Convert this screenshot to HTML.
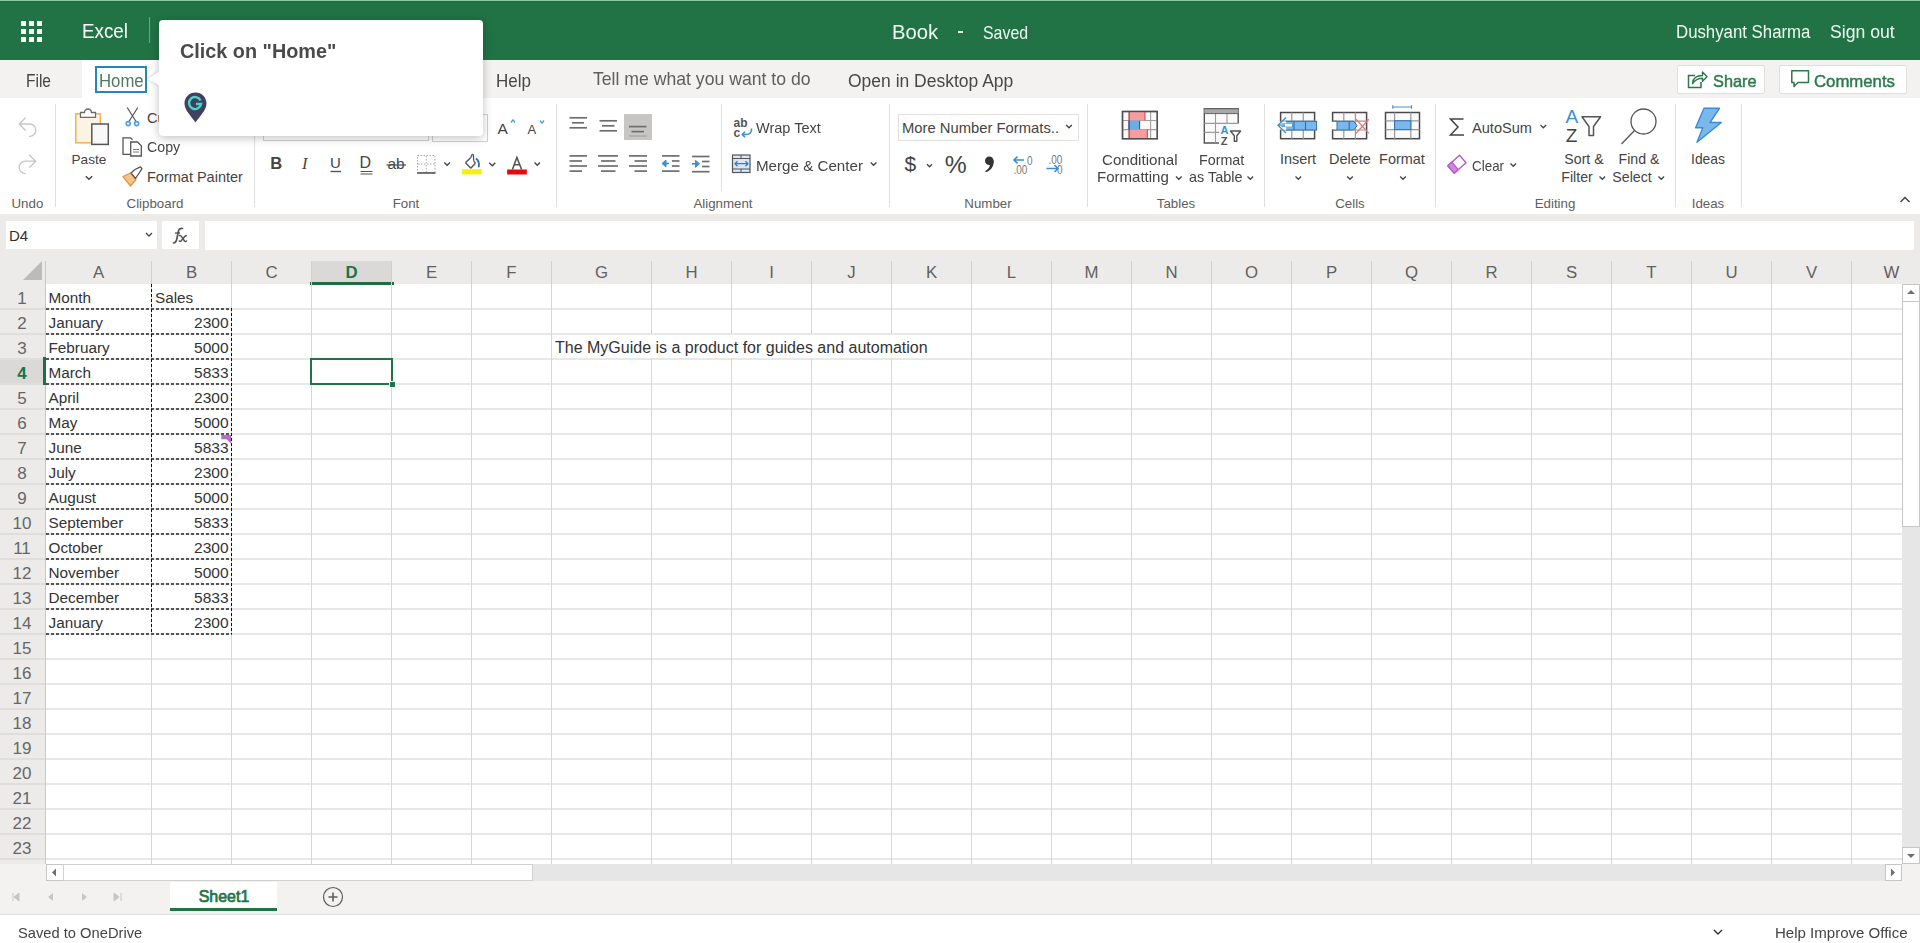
<!DOCTYPE html>
<html><head><meta charset="utf-8"><style>
html,body{margin:0;padding:0;}
body{width:1920px;height:943px;position:relative;overflow:hidden;background:#fff;font-family:"Liberation Sans", sans-serif;}
.a{position:absolute;}
.t{position:absolute;white-space:nowrap;line-height:1;}
svg.a{overflow:visible;}
</style></head><body>
<div class="a" style="left:0px;top:0px;width:1920px;height:60px;background:#217346;"></div>
<div class="a" style="left:0px;top:0px;width:1920px;height:1px;background:#8ecba5;"></div>
<div class="a" style="left:0px;top:1px;width:1920px;height:1px;background:#206843;"></div>
<div class="a" style="left:0px;top:60px;width:1920px;height:38px;background:#f3f2f1;"></div>
<div class="a" style="left:0px;top:98px;width:1920px;height:116px;background:#fff;"></div>
<div class="a" style="left:0px;top:214px;width:1920px;height:70px;background:#edebe9;"></div>
<div class="a" style="left:0px;top:284px;width:1920px;height:580px;background:#fff;"></div>
<div class="a" style="left:21px;top:21px;width:5px;height:5px;background:#fff;"></div>
<div class="a" style="left:21px;top:29px;width:5px;height:5px;background:#fff;"></div>
<div class="a" style="left:21px;top:37px;width:5px;height:5px;background:#fff;"></div>
<div class="a" style="left:29px;top:21px;width:5px;height:5px;background:#fff;"></div>
<div class="a" style="left:29px;top:29px;width:5px;height:5px;background:#fff;"></div>
<div class="a" style="left:29px;top:37px;width:5px;height:5px;background:#fff;"></div>
<div class="a" style="left:37px;top:21px;width:5px;height:5px;background:#fff;"></div>
<div class="a" style="left:37px;top:29px;width:5px;height:5px;background:#fff;"></div>
<div class="a" style="left:37px;top:37px;width:5px;height:5px;background:#fff;"></div>
<div class="t" style="top:21px;font-size:20px;color:#fff;left:82px;transform:scaleX(0.94);transform-origin:left 50%;">Excel</div>
<div class="a" style="left:149px;top:17px;width:1px;height:26px;background:rgba(255,255,255,0.35);"></div>
<div class="t" style="top:21px;font-size:21px;color:#f0faf3;left:892px;transform:scaleX(0.965);transform-origin:left 50%;">Book</div>
<div class="a" style="left:958px;top:31px;width:5px;height:1.6px;background:#e0f0e6;"></div>
<div class="t" style="top:24px;font-size:18.5px;color:#f0faf3;left:983.4px;transform:scaleX(0.86);transform-origin:left 50%;">Saved</div>
<div class="t" style="top:23px;font-size:18px;color:#f0faf3;left:1675.6px;transform:scaleX(0.933);transform-origin:left 50%;">Dushyant Sharma</div>
<div class="t" style="top:23px;font-size:18px;color:#f0faf3;left:1830.3px;transform:scaleX(0.98);transform-origin:left 50%;">Sign out</div>
<div class="a" style="left:82px;top:60px;width:78px;height:38px;background:#fff;"></div>
<div class="t" style="top:72px;font-size:18.6px;color:#444;left:25.8px;transform:scaleX(0.834);transform-origin:left 50%;">File</div>
<div class="a" style="left:95px;top:66px;width:52px;height:27px;border:2px solid #2486b9;box-sizing:border-box;"></div>
<div class="t" style="top:72px;font-size:18.3px;color:#4f7a62;left:98.8px;transform:scaleX(0.916);transform-origin:left 50%;">Home</div>
<div class="t" style="top:72px;font-size:18.6px;color:#484848;left:496px;transform:scaleX(0.915);transform-origin:left 50%;">Help</div>
<div class="t" style="top:70px;font-size:18.6px;color:#605e5c;left:593px;transform:scaleX(0.948);transform-origin:left 50%;">Tell me what you want to do</div>
<div class="t" style="top:72px;font-size:18.7px;color:#484848;left:848px;transform:scaleX(0.936);transform-origin:left 50%;">Open in Desktop App</div>
<div class="a" style="left:1677px;top:65px;width:88px;height:29px;background:#fff;border:1px solid #e1dfdd;box-sizing:border-box;border-radius:2px;"></div>
<div class="t" style="top:73px;font-size:17px;color:#2a7a4b;left:1712.5px;transform:scaleX(0.96);transform-origin:left 50%;-webkit-text-stroke:0.45px #2a7a4b;">Share</div>
<svg class="a" style="left:1686px;top:68px;" width="24" height="22" viewBox="0 0 24 22"><path d="M9 7.5 H2.5 V19.5 H15 V14" fill="none" stroke="#2a7a4b" stroke-width="1.5"/><path d="M6.5 15.5 C7 10 11 7.5 16.5 7.5 V4 L21 8.7 L16.5 13.2 V10.2 C12 10.2 9 12 6.5 15.5 Z" fill="none" stroke="#2a7a4b" stroke-width="1.4" stroke-linejoin="round"/></svg>
<div class="a" style="left:1779px;top:65px;width:128px;height:29px;background:#fff;border:1px solid #e1dfdd;box-sizing:border-box;border-radius:2px;"></div>
<div class="t" style="top:73px;font-size:17px;color:#2a7a4b;left:1814.4px;transform:scaleX(0.985);transform-origin:left 50%;-webkit-text-stroke:0.45px #2a7a4b;">Comments</div>
<svg class="a" style="left:1790px;top:69px;" width="22" height="22" viewBox="0 0 22 22"><path d="M1.8 1.8 H18.5 V13.5 H8 L4 17.5 V13.5 H1.8 Z" fill="none" stroke="#2a7a4b" stroke-width="1.5" stroke-linejoin="round"/></svg>
<div class="a" style="left:5.5px;top:221px;width:151.5px;height:28px;background:#fff;"></div>
<div class="t" style="top:228px;font-size:15px;color:#323130;left:9px;">D4</div>
<svg class="a" style="left:144px;top:231px;" width="10" height="8" viewBox="0 0 10 8"><path d="M2 2 L5 5 L8 2" fill="none" stroke="#444" stroke-width="1.3"/></svg>
<div class="a" style="left:162px;top:221px;width:37px;height:28px;background:#fff;"></div>
<svg class="a" style="left:160px;top:220px;" width="40" height="30" viewBox="0 0 40 30"><path d="M13.5 23 C15.5 23 16.5 21 17 18 L18.6 10.5 C19.2 8.5 20.5 8 22.5 8.5" fill="none" stroke="#555" stroke-width="1.7" stroke-linecap="round"/><path d="M15 13 H20" stroke="#555" stroke-width="1.4"/><path d="M19.5 15.5 C21 15 21.5 16 22.5 18 L24.5 21 C25.5 22 26 21.5 26.5 21 M26.2 15.5 C25 16 24 17 23 18.5 L21 21 C20.5 21.5 19.8 21.5 19.3 21" fill="none" stroke="#555" stroke-width="1.5" stroke-linecap="round"/></svg>
<div class="a" style="left:205px;top:221px;width:1709px;height:29px;background:#fff;"></div>
<div class="a" style="left:311px;top:261px;width:81px;height:23px;background:#dad9d8;"></div>
<div class="a" style="left:310px;top:282px;width:84px;height:3px;background:#1f6e43;"></div>
<div class="a" style="left:45px;top:261px;width:1px;height:23px;background:#d2d0ce;"></div>
<div class="t" style="top:265px;font-size:16.8px;color:#616161;left:98.5px;transform:translateX(-50%);transform-origin:center 50%;">A</div>
<div class="a" style="left:151px;top:261px;width:1px;height:23px;background:#d2d0ce;"></div>
<div class="t" style="top:265px;font-size:16.8px;color:#616161;left:191.5px;transform:translateX(-50%);transform-origin:center 50%;">B</div>
<div class="a" style="left:231px;top:261px;width:1px;height:23px;background:#d2d0ce;"></div>
<div class="t" style="top:265px;font-size:16.8px;color:#616161;left:271.5px;transform:translateX(-50%);transform-origin:center 50%;">C</div>
<div class="a" style="left:311px;top:261px;width:1px;height:23px;background:#d2d0ce;"></div>
<div class="t" style="top:265px;font-size:16.8px;color:#217346;font-weight:bold;left:351.5px;transform:translateX(-50%);transform-origin:center 50%;">D</div>
<div class="a" style="left:391px;top:261px;width:1px;height:23px;background:#d2d0ce;"></div>
<div class="t" style="top:265px;font-size:16.8px;color:#616161;left:431.5px;transform:translateX(-50%);transform-origin:center 50%;">E</div>
<div class="a" style="left:471px;top:261px;width:1px;height:23px;background:#d2d0ce;"></div>
<div class="t" style="top:265px;font-size:16.8px;color:#616161;left:511.5px;transform:translateX(-50%);transform-origin:center 50%;">F</div>
<div class="a" style="left:551px;top:261px;width:1px;height:23px;background:#d2d0ce;"></div>
<div class="t" style="top:265px;font-size:16.8px;color:#616161;left:601.5px;transform:translateX(-50%);transform-origin:center 50%;">G</div>
<div class="a" style="left:651px;top:261px;width:1px;height:23px;background:#d2d0ce;"></div>
<div class="t" style="top:265px;font-size:16.8px;color:#616161;left:691.5px;transform:translateX(-50%);transform-origin:center 50%;">H</div>
<div class="a" style="left:731px;top:261px;width:1px;height:23px;background:#d2d0ce;"></div>
<div class="t" style="top:265px;font-size:16.8px;color:#616161;left:771.5px;transform:translateX(-50%);transform-origin:center 50%;">I</div>
<div class="a" style="left:811px;top:261px;width:1px;height:23px;background:#d2d0ce;"></div>
<div class="t" style="top:265px;font-size:16.8px;color:#616161;left:851.5px;transform:translateX(-50%);transform-origin:center 50%;">J</div>
<div class="a" style="left:891px;top:261px;width:1px;height:23px;background:#d2d0ce;"></div>
<div class="t" style="top:265px;font-size:16.8px;color:#616161;left:931.5px;transform:translateX(-50%);transform-origin:center 50%;">K</div>
<div class="a" style="left:971px;top:261px;width:1px;height:23px;background:#d2d0ce;"></div>
<div class="t" style="top:265px;font-size:16.8px;color:#616161;left:1011.5px;transform:translateX(-50%);transform-origin:center 50%;">L</div>
<div class="a" style="left:1051px;top:261px;width:1px;height:23px;background:#d2d0ce;"></div>
<div class="t" style="top:265px;font-size:16.8px;color:#616161;left:1091.5px;transform:translateX(-50%);transform-origin:center 50%;">M</div>
<div class="a" style="left:1131px;top:261px;width:1px;height:23px;background:#d2d0ce;"></div>
<div class="t" style="top:265px;font-size:16.8px;color:#616161;left:1171.5px;transform:translateX(-50%);transform-origin:center 50%;">N</div>
<div class="a" style="left:1211px;top:261px;width:1px;height:23px;background:#d2d0ce;"></div>
<div class="t" style="top:265px;font-size:16.8px;color:#616161;left:1251.5px;transform:translateX(-50%);transform-origin:center 50%;">O</div>
<div class="a" style="left:1291px;top:261px;width:1px;height:23px;background:#d2d0ce;"></div>
<div class="t" style="top:265px;font-size:16.8px;color:#616161;left:1331.5px;transform:translateX(-50%);transform-origin:center 50%;">P</div>
<div class="a" style="left:1371px;top:261px;width:1px;height:23px;background:#d2d0ce;"></div>
<div class="t" style="top:265px;font-size:16.8px;color:#616161;left:1411.5px;transform:translateX(-50%);transform-origin:center 50%;">Q</div>
<div class="a" style="left:1451px;top:261px;width:1px;height:23px;background:#d2d0ce;"></div>
<div class="t" style="top:265px;font-size:16.8px;color:#616161;left:1491.5px;transform:translateX(-50%);transform-origin:center 50%;">R</div>
<div class="a" style="left:1531px;top:261px;width:1px;height:23px;background:#d2d0ce;"></div>
<div class="t" style="top:265px;font-size:16.8px;color:#616161;left:1571.5px;transform:translateX(-50%);transform-origin:center 50%;">S</div>
<div class="a" style="left:1611px;top:261px;width:1px;height:23px;background:#d2d0ce;"></div>
<div class="t" style="top:265px;font-size:16.8px;color:#616161;left:1651.5px;transform:translateX(-50%);transform-origin:center 50%;">T</div>
<div class="a" style="left:1691px;top:261px;width:1px;height:23px;background:#d2d0ce;"></div>
<div class="t" style="top:265px;font-size:16.8px;color:#616161;left:1731.5px;transform:translateX(-50%);transform-origin:center 50%;">U</div>
<div class="a" style="left:1771px;top:261px;width:1px;height:23px;background:#d2d0ce;"></div>
<div class="t" style="top:265px;font-size:16.8px;color:#616161;left:1811.5px;transform:translateX(-50%);transform-origin:center 50%;">V</div>
<div class="a" style="left:1851px;top:261px;width:1px;height:23px;background:#d2d0ce;"></div>
<div class="t" style="top:265px;font-size:16.8px;color:#616161;left:1891.5px;transform:translateX(-50%);transform-origin:center 50%;">W</div>
<svg class="a" style="left:23px;top:261px;" width="20" height="20" viewBox="0 0 20 20"><path d="M19 0 L19 19 L0 19 Z" fill="#bdbbb9"/></svg>
<div class="a" style="left:0px;top:284px;width:45px;height:580px;background:#edebe9;"></div>
<div class="a" style="left:45px;top:261px;width:1px;height:603px;background:#c8c6c4;"></div>
<div class="a" style="left:0px;top:359px;width:45px;height:25px;background:#dad9d8;"></div>
<div class="a" style="left:46px;top:308px;width:1856px;height:2px;background:#e8e8e8;"></div>
<div class="a" style="left:0px;top:308px;width:45px;height:2px;background:#dfdedd;"></div>
<div class="t" style="top:290px;font-size:17px;color:#666;left:22px;transform:translateX(-50%);transform-origin:center 50%;">1</div>
<div class="a" style="left:46px;top:333px;width:1856px;height:2px;background:#e8e8e8;"></div>
<div class="a" style="left:0px;top:333px;width:45px;height:2px;background:#dfdedd;"></div>
<div class="t" style="top:315px;font-size:17px;color:#666;left:22px;transform:translateX(-50%);transform-origin:center 50%;">2</div>
<div class="a" style="left:46px;top:358px;width:1856px;height:2px;background:#e8e8e8;"></div>
<div class="a" style="left:0px;top:358px;width:45px;height:2px;background:#dfdedd;"></div>
<div class="t" style="top:340px;font-size:17px;color:#666;left:22px;transform:translateX(-50%);transform-origin:center 50%;">3</div>
<div class="a" style="left:46px;top:383px;width:1856px;height:2px;background:#e8e8e8;"></div>
<div class="a" style="left:0px;top:383px;width:45px;height:2px;background:#dfdedd;"></div>
<div class="t" style="top:365px;font-size:17px;color:#217346;font-weight:bold;left:22px;transform:translateX(-50%);transform-origin:center 50%;">4</div>
<div class="a" style="left:46px;top:408px;width:1856px;height:2px;background:#e8e8e8;"></div>
<div class="a" style="left:0px;top:408px;width:45px;height:2px;background:#dfdedd;"></div>
<div class="t" style="top:390px;font-size:17px;color:#666;left:22px;transform:translateX(-50%);transform-origin:center 50%;">5</div>
<div class="a" style="left:46px;top:433px;width:1856px;height:2px;background:#e8e8e8;"></div>
<div class="a" style="left:0px;top:433px;width:45px;height:2px;background:#dfdedd;"></div>
<div class="t" style="top:415px;font-size:17px;color:#666;left:22px;transform:translateX(-50%);transform-origin:center 50%;">6</div>
<div class="a" style="left:46px;top:458px;width:1856px;height:2px;background:#e8e8e8;"></div>
<div class="a" style="left:0px;top:458px;width:45px;height:2px;background:#dfdedd;"></div>
<div class="t" style="top:440px;font-size:17px;color:#666;left:22px;transform:translateX(-50%);transform-origin:center 50%;">7</div>
<div class="a" style="left:46px;top:483px;width:1856px;height:2px;background:#e8e8e8;"></div>
<div class="a" style="left:0px;top:483px;width:45px;height:2px;background:#dfdedd;"></div>
<div class="t" style="top:465px;font-size:17px;color:#666;left:22px;transform:translateX(-50%);transform-origin:center 50%;">8</div>
<div class="a" style="left:46px;top:508px;width:1856px;height:2px;background:#e8e8e8;"></div>
<div class="a" style="left:0px;top:508px;width:45px;height:2px;background:#dfdedd;"></div>
<div class="t" style="top:490px;font-size:17px;color:#666;left:22px;transform:translateX(-50%);transform-origin:center 50%;">9</div>
<div class="a" style="left:46px;top:533px;width:1856px;height:2px;background:#e8e8e8;"></div>
<div class="a" style="left:0px;top:533px;width:45px;height:2px;background:#dfdedd;"></div>
<div class="t" style="top:515px;font-size:17px;color:#666;left:22px;transform:translateX(-50%);transform-origin:center 50%;">10</div>
<div class="a" style="left:46px;top:558px;width:1856px;height:2px;background:#e8e8e8;"></div>
<div class="a" style="left:0px;top:558px;width:45px;height:2px;background:#dfdedd;"></div>
<div class="t" style="top:540px;font-size:17px;color:#666;left:22px;transform:translateX(-50%);transform-origin:center 50%;">11</div>
<div class="a" style="left:46px;top:583px;width:1856px;height:2px;background:#e8e8e8;"></div>
<div class="a" style="left:0px;top:583px;width:45px;height:2px;background:#dfdedd;"></div>
<div class="t" style="top:565px;font-size:17px;color:#666;left:22px;transform:translateX(-50%);transform-origin:center 50%;">12</div>
<div class="a" style="left:46px;top:608px;width:1856px;height:2px;background:#e8e8e8;"></div>
<div class="a" style="left:0px;top:608px;width:45px;height:2px;background:#dfdedd;"></div>
<div class="t" style="top:590px;font-size:17px;color:#666;left:22px;transform:translateX(-50%);transform-origin:center 50%;">13</div>
<div class="a" style="left:46px;top:633px;width:1856px;height:2px;background:#e8e8e8;"></div>
<div class="a" style="left:0px;top:633px;width:45px;height:2px;background:#dfdedd;"></div>
<div class="t" style="top:615px;font-size:17px;color:#666;left:22px;transform:translateX(-50%);transform-origin:center 50%;">14</div>
<div class="a" style="left:46px;top:658px;width:1856px;height:2px;background:#e8e8e8;"></div>
<div class="a" style="left:0px;top:658px;width:45px;height:2px;background:#dfdedd;"></div>
<div class="t" style="top:640px;font-size:17px;color:#666;left:22px;transform:translateX(-50%);transform-origin:center 50%;">15</div>
<div class="a" style="left:46px;top:683px;width:1856px;height:2px;background:#e8e8e8;"></div>
<div class="a" style="left:0px;top:683px;width:45px;height:2px;background:#dfdedd;"></div>
<div class="t" style="top:665px;font-size:17px;color:#666;left:22px;transform:translateX(-50%);transform-origin:center 50%;">16</div>
<div class="a" style="left:46px;top:708px;width:1856px;height:2px;background:#e8e8e8;"></div>
<div class="a" style="left:0px;top:708px;width:45px;height:2px;background:#dfdedd;"></div>
<div class="t" style="top:690px;font-size:17px;color:#666;left:22px;transform:translateX(-50%);transform-origin:center 50%;">17</div>
<div class="a" style="left:46px;top:733px;width:1856px;height:2px;background:#e8e8e8;"></div>
<div class="a" style="left:0px;top:733px;width:45px;height:2px;background:#dfdedd;"></div>
<div class="t" style="top:715px;font-size:17px;color:#666;left:22px;transform:translateX(-50%);transform-origin:center 50%;">18</div>
<div class="a" style="left:46px;top:758px;width:1856px;height:2px;background:#e8e8e8;"></div>
<div class="a" style="left:0px;top:758px;width:45px;height:2px;background:#dfdedd;"></div>
<div class="t" style="top:740px;font-size:17px;color:#666;left:22px;transform:translateX(-50%);transform-origin:center 50%;">19</div>
<div class="a" style="left:46px;top:783px;width:1856px;height:2px;background:#e8e8e8;"></div>
<div class="a" style="left:0px;top:783px;width:45px;height:2px;background:#dfdedd;"></div>
<div class="t" style="top:765px;font-size:17px;color:#666;left:22px;transform:translateX(-50%);transform-origin:center 50%;">20</div>
<div class="a" style="left:46px;top:808px;width:1856px;height:2px;background:#e8e8e8;"></div>
<div class="a" style="left:0px;top:808px;width:45px;height:2px;background:#dfdedd;"></div>
<div class="t" style="top:790px;font-size:17px;color:#666;left:22px;transform:translateX(-50%);transform-origin:center 50%;">21</div>
<div class="a" style="left:46px;top:833px;width:1856px;height:2px;background:#e8e8e8;"></div>
<div class="a" style="left:0px;top:833px;width:45px;height:2px;background:#dfdedd;"></div>
<div class="t" style="top:815px;font-size:17px;color:#666;left:22px;transform:translateX(-50%);transform-origin:center 50%;">22</div>
<div class="a" style="left:46px;top:858px;width:1856px;height:2px;background:#e8e8e8;"></div>
<div class="a" style="left:0px;top:858px;width:45px;height:2px;background:#dfdedd;"></div>
<div class="t" style="top:840px;font-size:17px;color:#666;left:22px;transform:translateX(-50%);transform-origin:center 50%;">23</div>
<div class="a" style="left:151px;top:284px;width:1px;height:580px;background:#d6d6d6;"></div>
<div class="a" style="left:231px;top:284px;width:1px;height:580px;background:#d6d6d6;"></div>
<div class="a" style="left:311px;top:284px;width:1px;height:580px;background:#d6d6d6;"></div>
<div class="a" style="left:391px;top:284px;width:1px;height:580px;background:#d6d6d6;"></div>
<div class="a" style="left:471px;top:284px;width:1px;height:580px;background:#d6d6d6;"></div>
<div class="a" style="left:551px;top:284px;width:1px;height:580px;background:#d6d6d6;"></div>
<div class="a" style="left:651px;top:284px;width:1px;height:580px;background:#d6d6d6;"></div>
<div class="a" style="left:731px;top:284px;width:1px;height:580px;background:#d6d6d6;"></div>
<div class="a" style="left:811px;top:284px;width:1px;height:580px;background:#d6d6d6;"></div>
<div class="a" style="left:891px;top:284px;width:1px;height:580px;background:#d6d6d6;"></div>
<div class="a" style="left:971px;top:284px;width:1px;height:580px;background:#d6d6d6;"></div>
<div class="a" style="left:1051px;top:284px;width:1px;height:580px;background:#d6d6d6;"></div>
<div class="a" style="left:1131px;top:284px;width:1px;height:580px;background:#d6d6d6;"></div>
<div class="a" style="left:1211px;top:284px;width:1px;height:580px;background:#d6d6d6;"></div>
<div class="a" style="left:1291px;top:284px;width:1px;height:580px;background:#d6d6d6;"></div>
<div class="a" style="left:1371px;top:284px;width:1px;height:580px;background:#d6d6d6;"></div>
<div class="a" style="left:1451px;top:284px;width:1px;height:580px;background:#d6d6d6;"></div>
<div class="a" style="left:1531px;top:284px;width:1px;height:580px;background:#d6d6d6;"></div>
<div class="a" style="left:1611px;top:284px;width:1px;height:580px;background:#d6d6d6;"></div>
<div class="a" style="left:1691px;top:284px;width:1px;height:580px;background:#d6d6d6;"></div>
<div class="a" style="left:1771px;top:284px;width:1px;height:580px;background:#d6d6d6;"></div>
<div class="a" style="left:1851px;top:284px;width:1px;height:580px;background:#d6d6d6;"></div>
<div class="t" style="top:290px;font-size:15.3px;color:#333;left:48.5px;">Month</div>
<div class="t" style="top:290px;font-size:15.3px;color:#333;left:155px;">Sales</div>
<div class="t" style="top:315px;font-size:15.3px;color:#333;left:48.5px;">January</div>
<div class="t" style="top:315px;font-size:15.5px;color:#333;right:1691.5px;">2300</div>
<div class="t" style="top:340px;font-size:15.3px;color:#333;left:48.5px;">February</div>
<div class="t" style="top:340px;font-size:15.5px;color:#333;right:1691.5px;">5000</div>
<div class="t" style="top:365px;font-size:15.3px;color:#333;left:48.5px;">March</div>
<div class="t" style="top:365px;font-size:15.5px;color:#333;right:1691.5px;">5833</div>
<div class="t" style="top:390px;font-size:15.3px;color:#333;left:48.5px;">April</div>
<div class="t" style="top:390px;font-size:15.5px;color:#333;right:1691.5px;">2300</div>
<div class="t" style="top:415px;font-size:15.3px;color:#333;left:48.5px;">May</div>
<div class="t" style="top:415px;font-size:15.5px;color:#333;right:1691.5px;">5000</div>
<div class="t" style="top:440px;font-size:15.3px;color:#333;left:48.5px;">June</div>
<div class="t" style="top:440px;font-size:15.5px;color:#333;right:1691.5px;">5833</div>
<div class="t" style="top:465px;font-size:15.3px;color:#333;left:48.5px;">July</div>
<div class="t" style="top:465px;font-size:15.5px;color:#333;right:1691.5px;">2300</div>
<div class="t" style="top:490px;font-size:15.3px;color:#333;left:48.5px;">August</div>
<div class="t" style="top:490px;font-size:15.5px;color:#333;right:1691.5px;">5000</div>
<div class="t" style="top:515px;font-size:15.3px;color:#333;left:48.5px;">September</div>
<div class="t" style="top:515px;font-size:15.5px;color:#333;right:1691.5px;">5833</div>
<div class="t" style="top:540px;font-size:15.3px;color:#333;left:48.5px;">October</div>
<div class="t" style="top:540px;font-size:15.5px;color:#333;right:1691.5px;">2300</div>
<div class="t" style="top:565px;font-size:15.3px;color:#333;left:48.5px;">November</div>
<div class="t" style="top:565px;font-size:15.5px;color:#333;right:1691.5px;">5000</div>
<div class="t" style="top:590px;font-size:15.3px;color:#333;left:48.5px;">December</div>
<div class="t" style="top:590px;font-size:15.5px;color:#333;right:1691.5px;">5833</div>
<div class="t" style="top:615px;font-size:15.3px;color:#333;left:48.5px;">January</div>
<div class="t" style="top:615px;font-size:15.5px;color:#333;right:1691.5px;">2300</div>
<div class="a" style="left:651px;top:334px;width:1px;height:24px;background:#fff;"></div>
<div class="a" style="left:731px;top:334px;width:1px;height:24px;background:#fff;"></div>
<div class="a" style="left:811px;top:334px;width:1px;height:24px;background:#fff;"></div>
<div class="a" style="left:891px;top:334px;width:1px;height:24px;background:#fff;"></div>
<div class="t" style="top:340px;font-size:16px;color:#333;left:555px;">The MyGuide is a product for guides and automation</div>
<svg class="a" style="left:0px;top:0px;" width="1920" height="943" viewBox="0 0 1920 943"><line x1="46" y1="309" x2="232" y2="309" stroke="#555" stroke-width="2" stroke-dasharray="3 2"/><line x1="46" y1="334" x2="232" y2="334" stroke="#555" stroke-width="2" stroke-dasharray="3 2"/><line x1="46" y1="359" x2="232" y2="359" stroke="#555" stroke-width="2" stroke-dasharray="3 2"/><line x1="46" y1="384" x2="232" y2="384" stroke="#555" stroke-width="2" stroke-dasharray="3 2"/><line x1="46" y1="409" x2="232" y2="409" stroke="#555" stroke-width="2" stroke-dasharray="3 2"/><line x1="46" y1="434" x2="232" y2="434" stroke="#555" stroke-width="2" stroke-dasharray="3 2"/><line x1="46" y1="459" x2="232" y2="459" stroke="#555" stroke-width="2" stroke-dasharray="3 2"/><line x1="46" y1="484" x2="232" y2="484" stroke="#555" stroke-width="2" stroke-dasharray="3 2"/><line x1="46" y1="509" x2="232" y2="509" stroke="#555" stroke-width="2" stroke-dasharray="3 2"/><line x1="46" y1="534" x2="232" y2="534" stroke="#555" stroke-width="2" stroke-dasharray="3 2"/><line x1="46" y1="559" x2="232" y2="559" stroke="#555" stroke-width="2" stroke-dasharray="3 2"/><line x1="46" y1="584" x2="232" y2="584" stroke="#555" stroke-width="2" stroke-dasharray="3 2"/><line x1="46" y1="609" x2="232" y2="609" stroke="#555" stroke-width="2" stroke-dasharray="3 2"/><line x1="46" y1="634" x2="232" y2="634" stroke="#555" stroke-width="2" stroke-dasharray="3 2"/><line x1="151.5" y1="284" x2="151.5" y2="634" stroke="#111" stroke-width="1" stroke-dasharray="3 2"/><line x1="231.5" y1="308" x2="231.5" y2="634" stroke="#111" stroke-width="1" stroke-dasharray="3 2"/></svg>
<div class="a" style="left:43px;top:357px;width:3px;height:28px;background:#1f6e43;"></div>
<div class="a" style="left:310px;top:358px;width:83px;height:27px;border:2px solid #217346;box-sizing:border-box;"></div>
<div class="a" style="left:389px;top:381px;width:5px;height:5px;background:#217346;border:1px solid #fff;box-sizing:content-box;"></div>
<svg class="a" style="left:221px;top:434px;" width="12" height="10" viewBox="0 0 12 10"><path d="M0.3 1 H10 V9.5 L5.5 5.2 H0.3 Z" fill="#b86cc8"/></svg>
<div class="a" style="left:1902px;top:284px;width:18px;height:580px;background:#e6e6e6;"></div>
<div class="a" style="left:1902px;top:284px;width:18px;height:17.5px;background:#fff;border:1px solid #c8c6c4;box-sizing:border-box;"></div>
<svg class="a" style="left:1906px;top:288px;" width="10" height="8" viewBox="0 0 10 8"><path d="M1 6 L5 2 L9 6 Z" fill="#6e6e6e"/></svg>
<div class="a" style="left:1902px;top:301px;width:18px;height:226px;background:#fff;border:1px solid #c8c6c4;box-sizing:border-box;"></div>
<div class="a" style="left:1902px;top:847px;width:18px;height:17px;background:#fff;border:1px solid #c8c6c4;box-sizing:border-box;"></div>
<svg class="a" style="left:1906px;top:852px;" width="10" height="8" viewBox="0 0 10 8"><path d="M1 2 L9 2 L5 6 Z" fill="#6e6e6e"/></svg>
<div class="a" style="left:0px;top:864px;width:1920px;height:17px;background:#f3f2f1;"></div>
<div class="a" style="left:46px;top:864px;width:1856px;height:17px;background:#e6e6e6;"></div>
<div class="a" style="left:46px;top:864px;width:17.5px;height:17px;background:#fff;border:1px solid #c8c6c4;box-sizing:border-box;"></div>
<svg class="a" style="left:49px;top:867px;" width="10" height="11" viewBox="0 0 10 11"><path d="M7 1.5 L3 5.5 L7 9.5 Z" fill="#6e6e6e"/></svg>
<div class="a" style="left:62.5px;top:864px;width:470px;height:17px;background:#fff;border:1px solid #d2d0ce;box-sizing:border-box;"></div>
<div class="a" style="left:1885px;top:864px;width:17px;height:17px;background:#fff;border:1px solid #c8c6c4;box-sizing:border-box;"></div>
<svg class="a" style="left:1888px;top:867px;" width="10" height="11" viewBox="0 0 10 11"><path d="M3 1.5 L7 5.5 L3 9.5 Z" fill="#6e6e6e"/></svg>
<div class="a" style="left:0px;top:881px;width:1920px;height:34px;background:#f3f2f1;"></div>
<div class="a" style="left:0px;top:914px;width:1920px;height:1px;background:#e1dfdd;"></div>
<div class="a" style="left:170px;top:882px;width:107px;height:29px;background:#fff;"></div>
<div class="a" style="left:170px;top:908px;width:107px;height:3px;background:#217346;"></div>
<div class="t" style="top:888px;font-size:16.5px;color:#217346;left:223.5px;transform:translateX(-50%) scaleX(0.97);transform-origin:center 50%;-webkit-text-stroke:0.7px #217346;">Sheet1</div>
<svg class="a" style="left:322px;top:886px;" width="22" height="22" viewBox="0 0 22 22"><circle cx="11" cy="11" r="9.5" fill="none" stroke="#605e5c" stroke-width="1.2"/><path d="M11 6.5 V15.5 M6.5 11 H15.5" stroke="#605e5c" stroke-width="1.6"/></svg>
<svg class="a" style="left:0px;top:0px;" width="1920" height="943" viewBox="0 0 1920 943"><path d="M13 893 V901 M19 893 L14 897 L19 901 Z" stroke="#c8c6c4" fill="#c8c6c4"/><path d="M53 893 L48 897 L53 901 Z" fill="#c8c6c4"/><path d="M82 893 L87 897 L82 901 Z" fill="#c8c6c4"/><path d="M114 893 L119 897 L114 901 Z M121 893 V901" stroke="#c8c6c4" fill="#c8c6c4"/></svg>
<div class="t" style="top:925px;font-size:15px;color:#444;left:17.5px;transform:scaleX(0.98);transform-origin:left 50%;">Saved to OneDrive</div>
<svg class="a" style="left:1712px;top:928px;" width="12" height="8" viewBox="0 0 12 8"><path d="M2 2 L6 6 L10 2" fill="none" stroke="#323130" stroke-width="1.4"/></svg>
<div class="t" style="top:925px;font-size:15.5px;color:#444;left:1775px;transform:scaleX(0.97);transform-origin:left 50%;">Help Improve Office</div>
<div class="a" style="left:55px;top:104px;width:1px;height:103px;background:#e1dfdd;"></div>
<div class="a" style="left:254px;top:104px;width:1px;height:103px;background:#e1dfdd;"></div>
<div class="a" style="left:556px;top:104px;width:1px;height:103px;background:#e1dfdd;"></div>
<div class="a" style="left:889px;top:104px;width:1px;height:103px;background:#e1dfdd;"></div>
<div class="a" style="left:1087px;top:104px;width:1px;height:103px;background:#e1dfdd;"></div>
<div class="a" style="left:1264px;top:104px;width:1px;height:103px;background:#e1dfdd;"></div>
<div class="a" style="left:1435px;top:104px;width:1px;height:103px;background:#e1dfdd;"></div>
<div class="a" style="left:1675px;top:104px;width:1px;height:103px;background:#e1dfdd;"></div>
<div class="a" style="left:1741px;top:104px;width:1px;height:103px;background:#e1dfdd;"></div>
<div class="a" style="left:721px;top:104px;width:1px;height:87px;background:#e1dfdd;"></div>
<div class="t" style="top:197px;font-size:13.3px;color:#605e5c;left:27.4px;transform:translateX(-50%);transform-origin:center 50%;">Undo</div>
<div class="t" style="top:197px;font-size:13.3px;color:#605e5c;left:155px;transform:translateX(-50%);transform-origin:center 50%;">Clipboard</div>
<div class="t" style="top:197px;font-size:13.3px;color:#605e5c;left:406px;transform:translateX(-50%);transform-origin:center 50%;">Font</div>
<div class="t" style="top:197px;font-size:13.3px;color:#605e5c;left:723px;transform:translateX(-50%);transform-origin:center 50%;">Alignment</div>
<div class="t" style="top:197px;font-size:13.3px;color:#605e5c;left:988px;transform:translateX(-50%);transform-origin:center 50%;">Number</div>
<div class="t" style="top:197px;font-size:13.3px;color:#605e5c;left:1176px;transform:translateX(-50%);transform-origin:center 50%;">Tables</div>
<div class="t" style="top:197px;font-size:13.3px;color:#605e5c;left:1350px;transform:translateX(-50%);transform-origin:center 50%;">Cells</div>
<div class="t" style="top:197px;font-size:13.3px;color:#605e5c;left:1555px;transform:translateX(-50%);transform-origin:center 50%;">Editing</div>
<div class="t" style="top:197px;font-size:13.3px;color:#605e5c;left:1708px;transform:translateX(-50%);transform-origin:center 50%;">Ideas</div>
<svg class="a" style="left:0px;top:0px;" width="1920" height="943" viewBox="0 0 1920 943"><g fill="none" stroke="#c8c6c4" stroke-width="1.3" stroke-linecap="round" stroke-linejoin="round"><path d="M25.3 118 L19.2 124 L25.3 130.3 M19.4 124 H29.6 A6.2 6.2 0 0 1 29.6 136.4"/><path d="M29.7 155.2 L35.8 161.2 L29.7 167.3 M35.6 161.2 H25.4 A6.2 6.2 0 0 0 25.4 173.6"/></g></svg>
<svg class="a" style="left:0px;top:0px;" width="1920" height="943" viewBox="0 0 1920 943"><rect x="75.8" y="113.8" width="24.5" height="29" fill="#fbf3e4" stroke="#f2b75a" stroke-width="1.6"/><path d="M80.5 117.3 V112.5 H84.5 A3.5 3.5 0 0 1 91.5 112.5 H95.5 V117.3 Z" fill="#fff" stroke="#6b6b6b" stroke-width="1.3"/><rect x="91.8" y="124" width="16.5" height="20.4" fill="#f8f8f8" stroke="#555" stroke-width="1.5"/><path d="M85.8 176.2 L89 179.2 L92.2 176.2" fill="none" stroke="#444" stroke-width="1.4"/><path d="M127.2 107.5 L136 121.5 M137.8 107.5 L129 121.5" stroke="#555" stroke-width="1.2" fill="none"/><circle cx="128.2" cy="123.6" r="2" fill="none" stroke="#4a9de0" stroke-width="1.6"/><circle cx="136.6" cy="123.6" r="2" fill="none" stroke="#4a9de0" stroke-width="1.6"/><path d="M130.2 154.3 H123 V137.8 H130.5 L132.5 139.8" fill="none" stroke="#555" stroke-width="1.3"/><path d="M130.7 142 H137.5 L141.3 145.8 V156 H130.7 Z" fill="#fff" stroke="#555" stroke-width="1.3"/><path d="M133 149.5 H139 M133 152 H139" stroke="#777" stroke-width="1"/><path d="M123 176.5 L131.5 172.5 L136 179.5 L130.5 186 Z" fill="#f5c48a" stroke="#e8963c" stroke-width="1.3" stroke-linejoin="round"/><path d="M131 173 L135 169.5 L140.5 166.8 L142 168.6 L138.5 174 L135.5 178.5 Z" fill="#fff" stroke="#555" stroke-width="1.3" stroke-linejoin="round"/></svg>
<div class="t" style="top:153px;font-size:13.6px;color:#444444;left:88.9px;transform:translateX(-50%);transform-origin:center 50%;">Paste</div>
<div class="t" style="top:111px;font-size:14.5px;color:#444444;left:147px;">Cut</div>
<div class="t" style="top:140px;font-size:14.5px;color:#444444;left:147px;transform:scaleX(0.98);transform-origin:left 50%;">Copy</div>
<div class="t" style="top:170px;font-size:14.5px;color:#444444;left:147px;transform:scaleX(1.0);transform-origin:left 50%;">Format Painter</div>
<div class="a" style="left:263px;top:114px;width:166px;height:27px;background:#fff;border:1px solid #d4d2d0;box-sizing:border-box;"></div>
<div class="a" style="left:432px;top:114px;width:55.5px;height:28px;background:#fff;border:1px solid #d4d2d0;box-sizing:border-box;"></div>
<svg class="a" style="left:0px;top:0px;" width="1920" height="943" viewBox="0 0 1920 943"><g font-family="Liberation Sans" fill="#444"><text x="497.5" y="134" font-size="15.5">A</text><text x="527.5" y="134.3" font-size="13">A</text></g><path d="M511 122.5 L513 119.8 L515 122.5" fill="none" stroke="#4a9de0" stroke-width="1.3"/><path d="M540 120.5 L542 123.2 L544 120.5" fill="none" stroke="#4a9de0" stroke-width="1.3"/><g font-family="Liberation Sans" fill="#444"><text x="270.3" y="169.3" font-size="16.5" font-weight="bold">B</text><text x="302" y="169.3" font-size="16.5" font-style="italic" font-family="Liberation Serif">I</text><text x="330" y="168" font-size="15">U</text><text x="359.5" y="168" font-size="16">D</text><text x="387.5" y="169" font-size="15.5">ab</text></g><path d="M330.5 171.5 H341" stroke="#555" stroke-width="1.4"/><path d="M360.5 171.5 H372.5 M360.5 174 H372.5" stroke="#555" stroke-width="1.2"/><path d="M386.5 165 H406" stroke="#555" stroke-width="1.3"/><rect x="417.5" y="155.5" width="17.5" height="17" fill="none" stroke="#aaa" stroke-width="1" stroke-dasharray="1.5 1.5"/><path d="M426.2 156 V172.5 M418 164 H434.5" stroke="#aaa" stroke-width="1" stroke-dasharray="1.5 1.5"/><path d="M417 173 H435.5" stroke="#555" stroke-width="1.6"/><path d="M444.3 162.5 L447.2 165.3 L450 162.5" fill="none" stroke="#444" stroke-width="1.3"/><path d="M465.5 162.8 L470.8 157.6 M470.8 168.3 L465.5 162.8 M470.8 168.3 L475.4 163.2" fill="none" stroke="#555" stroke-width="1.4" stroke-linejoin="round"/><path d="M470.8 157.6 L471.8 155 Q472.6 153.8 473.4 155 L473.7 160.8" fill="none" stroke="#555" stroke-width="1.3"/><path d="M473.7 161 L475.4 163.2" stroke="#555" stroke-width="1.3"/><path d="M476.5 159 Q479.6 161.5 478.8 166.5" fill="none" stroke="#2d6ea8" stroke-width="1.8" stroke-linecap="round"/><rect x="462.1" y="169.2" width="19.7" height="5.2" fill="#f6f00a"/><path d="M489.3 162.7 L492.3 165.8 L495.3 162.7" fill="none" stroke="#444" stroke-width="1.3"/><path d="M512.4 169.5 L516.9 157.5 L521.6 169.5 M514.2 164.8 H519.8" fill="none" stroke="#555" stroke-width="1.6"/><rect x="507.1" y="169.5" width="19.7" height="5" fill="#e80a0a"/><path d="M534.5 162.5 L537.3 165.3 L540 162.5" fill="none" stroke="#444" stroke-width="1.3"/></svg>
<div class="a" style="left:624px;top:113.5px;width:28px;height:26.5px;background:#c8c6c4;"></div>
<svg class="a" style="left:0px;top:0px;" width="1920" height="943" viewBox="0 0 1920 943"><path d="M569.5 117.8 H587.0" stroke="#6e6e6e" stroke-width="1.7"/><path d="M572.0 122.8 H584.0" stroke="#6e6e6e" stroke-width="1.7"/><path d="M569.5 127.8 H587.0" stroke="#6e6e6e" stroke-width="1.7"/><path d="M599.5 120.8 H617.0" stroke="#6e6e6e" stroke-width="1.7"/><path d="M602.0 125.8 H614.5" stroke="#6e6e6e" stroke-width="1.7"/><path d="M599.5 130.8 H617.0" stroke="#6e6e6e" stroke-width="1.7"/><path d="M629 126.6 H646.5" stroke="#6e6e6e" stroke-width="1.7"/><path d="M631.5 131.6 H644" stroke="#6e6e6e" stroke-width="1.7"/><path d="M629 136 H646.5" stroke="#a8a6a4" stroke-width="1.4"/><path d="M569.5 155.9 H587.0" stroke="#6e6e6e" stroke-width="1.7"/><path d="M569.5 161 H582.0" stroke="#6e6e6e" stroke-width="1.7"/><path d="M569.5 166 H587.0" stroke="#6e6e6e" stroke-width="1.7"/><path d="M569.5 171.1 H582.0" stroke="#6e6e6e" stroke-width="1.7"/><path d="M598 155.9 H618" stroke="#6e6e6e" stroke-width="1.7"/><path d="M601 161 H615.5" stroke="#6e6e6e" stroke-width="1.7"/><path d="M598 166 H618" stroke="#6e6e6e" stroke-width="1.7"/><path d="M601 171.1 H615.5" stroke="#6e6e6e" stroke-width="1.7"/><path d="M629 155.9 H647" stroke="#6e6e6e" stroke-width="1.7"/><path d="M634.5 161 H647" stroke="#6e6e6e" stroke-width="1.7"/><path d="M629 166 H647" stroke="#6e6e6e" stroke-width="1.7"/><path d="M634.5 171.1 H647" stroke="#6e6e6e" stroke-width="1.7"/><path d="M662 155.9 H679.5" stroke="#6e6e6e" stroke-width="1.7"/><path d="M672 161 H679.5" stroke="#6e6e6e" stroke-width="1.7"/><path d="M672 166 H679.5" stroke="#6e6e6e" stroke-width="1.7"/><path d="M662 171.1 H679.5" stroke="#6e6e6e" stroke-width="1.7"/><path d="M664.5 163.5 H669" stroke="#3d8fd0" stroke-width="1.6"/><path d="M662 163.5 L666 160 V167 Z" fill="#3d8fd0" stroke="#3d8fd0" stroke-width="1"/><path d="M692 156.5 H709.5" stroke="#6e6e6e" stroke-width="1.7"/><path d="M702 161.5 H709.5" stroke="#6e6e6e" stroke-width="1.7"/><path d="M702 166.5 H709.5" stroke="#6e6e6e" stroke-width="1.7"/><path d="M692 171.7 H709.5" stroke="#6e6e6e" stroke-width="1.7"/><path d="M692 163.8 H696.5" stroke="#3d8fd0" stroke-width="1.6"/><path d="M699.5 163.8 L695.5 160.3 V167.3 Z" fill="#3d8fd0" stroke="#3d8fd0" stroke-width="1"/><g font-family="Liberation Sans" fill="#555" font-size="12" font-weight="bold"><text x="733.5" y="126.5">ab</text><text x="733.5" y="136.5">c</text></g><path d="M751.5 128.5 Q752 134.5 746 134.5 H742.5 M745 131.8 L742.3 134.5 L745 137.2" fill="none" stroke="#3d8fd0" stroke-width="1.6"/><rect x="732.5" y="155" width="17.5" height="17.5" fill="#d6e8f7" stroke="#555" stroke-width="1.2"/><path d="M732.5 158.5 H750 M732.5 169 H750 M741 155 V158.5 M741 169 V172.5" stroke="#555" stroke-width="1"/><path d="M735 163.7 H748 M737.5 161.2 L735 163.7 L737.5 166.2 M745.5 161.2 L748 163.7 L745.5 166.2" fill="none" stroke="#3a78c4" stroke-width="1.3"/><path d="M870.8 162.5 L873.6 165.3 L876.4 162.5" fill="none" stroke="#444" stroke-width="1.3"/></svg>
<div class="t" style="top:121px;font-size:14.8px;color:#444444;left:756px;transform:scaleX(0.98);transform-origin:left 50%;">Wrap Text</div>
<div class="t" style="top:159px;font-size:14.8px;color:#444444;left:756px;transform:scaleX(1.024);transform-origin:left 50%;">Merge &amp; Center</div>
<div class="a" style="left:898px;top:113.5px;width:181px;height:27px;background:#fff;border:1px solid #e3e1df;box-sizing:border-box;"></div>
<div class="t" style="top:121px;font-size:14.8px;color:#444444;left:902px;transform:scaleX(1.0);transform-origin:left 50%;">More Number Formats..</div>
<svg class="a" style="left:0px;top:0px;" width="1920" height="943" viewBox="0 0 1920 943"><path d="M1066.2 125 L1069 127.8 L1071.8 125" fill="none" stroke="#444" stroke-width="1.3"/><g font-family="Liberation Sans" fill="#444"><text x="904.5" y="171" font-size="21">$</text><text transform="translate(944.8 173.2) scale(1.05 1)" font-size="23.5">%</text></g><path d="M927 164.3 L929.5 166.8 L932 164.3" fill="none" stroke="#444" stroke-width="1.3"/><circle cx="989.3" cy="160.8" r="4.3" fill="#333"/><path d="M993.3 160 C994.8 165 991.5 170.5 985.8 172.3 L985.3 171 C988.8 169 990.5 166 989.5 163.5 Z" fill="#333"/><g font-family="Liberation Sans" fill="#777" font-size="12.5"><text transform="translate(1027 165) scale(0.8 1)">0</text><text transform="translate(1013.5 173.5) scale(0.8 1)">.00</text><text transform="translate(1048.5 163.5) scale(0.8 1)">.00</text><text transform="translate(1057 173.5) scale(0.8 1)">0</text></g><path d="M1014 160 H1024 M1017.5 156.5 L1014 160 L1017.5 163.5" fill="none" stroke="#3d8fd0" stroke-width="1.6"/><path d="M1046.5 168.5 H1058 M1054.5 165 L1058 168.5 L1054.5 172" fill="none" stroke="#3d8fd0" stroke-width="1.6"/></svg>
<svg class="a" style="left:0px;top:0px;" width="1920" height="943" viewBox="0 0 1920 943"><rect x="1122.5" y="111.5" width="34.8" height="27.2" fill="#fafafa" stroke="#505050" stroke-width="1.4"/><path d="M1122.5 120.5 H1157.3 M1122.5 129.6 H1157.3 M1150.6 111.5 V138.7" stroke="#a0a0a0" stroke-width="1.1"/><path d="M1129.1 111.5 H1145 V120.5 H1129.1 Z" fill="#f89ca2"/><path d="M1129.1 129.6 H1147.3 V138.7 H1129.1 Z" fill="#f89ca2"/><path d="M1129.1 120.5 H1139.6 V129.6 H1129.1 Z" fill="#6aaee8"/><path d="M1129.1 111.5 V138.7" stroke="#b03a3a" stroke-width="1.3"/><path d="M1129.1 120.8 V129.3" stroke="#2d5f9a" stroke-width="1.3"/><path d="M1139.6 120.8 V129.3" stroke="#2d5f9a" stroke-width="1.1"/><path d="M1145 111.8 V120.5 M1147.3 129.6 V138.5" stroke="#c04848" stroke-width="1"/><rect x="1122.5" y="111.5" width="34.8" height="27.2" fill="none" stroke="#505050" stroke-width="1.4"/><path d="M1219 143 H1204.3 V108.8 H1238.2 V123.4" fill="#fafafa" stroke="#555" stroke-width="1.4"/><rect x="1204.3" y="108.8" width="33.9" height="4.8" fill="#a8a8a8"/><path d="M1204.3 123.4 H1238.2 M1204.3 132.4 H1219 M1215.5 113.6 V143 M1227 113.6 V123.4" stroke="#9a9a9a" stroke-width="1.1"/><path d="M1204.3 108.8 H1238.2 M1204.3 113.6 H1238.2" stroke="#666" stroke-width="1"/><text x="1220.6" y="134" font-family="Liberation Sans" font-size="11" font-weight="bold" fill="#3d8fd0">A</text><text x="1220.8" y="145.3" font-family="Liberation Sans" font-size="11" font-weight="bold" fill="#555">Z</text><path d="M1230.5 131 H1240.6 L1236.8 135.8 V141.2 H1234.3 V135.8 Z" fill="#fff" stroke="#555" stroke-width="1.4" stroke-linejoin="round"/><path d="M1176 176.5 L1178.8 179.3 L1181.6 176.5 M1247.5 176.5 L1250.3 179.3 L1253.1 176.5" fill="none" stroke="#444" stroke-width="1.3"/></svg>
<div class="t" style="top:153px;font-size:14.6px;color:#444444;left:1102px;transform:scaleX(1.035);transform-origin:left 50%;">Conditional</div>
<div class="t" style="top:170px;font-size:14.6px;color:#444444;left:1097px;transform:scaleX(1.03);transform-origin:left 50%;">Formatting</div>
<div class="t" style="top:153px;font-size:14.6px;color:#444444;left:1199px;transform:scaleX(0.98);transform-origin:left 50%;">Format</div>
<div class="t" style="top:170px;font-size:14.6px;color:#444444;left:1188.5px;transform:scaleX(0.99);transform-origin:left 50%;">as Table</div>
<svg class="a" style="left:0px;top:0px;" width="1920" height="943" viewBox="0 0 1920 943"><rect x="1280.6" y="112.5" width="34" height="26.2" fill="#fafafa" stroke="#4a4a4a" stroke-width="1.5"/><path d="M1280.6 121.2 H1314.6 M1280.6 130 H1314.6 M1291.8 112.5 V138.7 M1303.3 112.5 V138.7" stroke="#999" stroke-width="1.2"/><rect x="1286.3" y="121.3" width="30.3" height="8.7" fill="#7ab8ec" stroke="#2f6fb0" stroke-width="1"/><path d="M1294 121.3 V130 M1305.5 121.3 V130" stroke="#2f6fb0" stroke-width="1.1"/><rect x="1278.5" y="121.8" width="8" height="7.8" fill="#fff"/><path d="M1286 117.5 L1278 125.2 L1286 133 M1278.5 125.2 H1294" fill="none" stroke="#3d8fd0" stroke-width="1.3"/><path d="M1281.5 123.8 H1294 M1281.5 126.6 H1294" fill="none" stroke="#3d8fd0" stroke-width="0.9"/><path d="M1285 123.8 H1292 V126.6 H1285 Z" fill="#fff"/><path d="M1337 121.2 H1332.6 V112.5 H1366.6 V138.7 H1332.6 V130 H1337" fill="#fafafa" stroke="#4a4a4a" stroke-width="1.5"/><path d="M1332.6 121.2 H1366.6 M1332.6 130 H1366.6 M1343.8 112.5 V138.7 M1355.4 112.5 V138.7" stroke="#999" stroke-width="1.2"/><rect x="1333.5" y="122" width="3.5" height="7.4" fill="#fff"/><path d="M1337 121.3 H1353.5 L1357.2 125.6 L1353.5 130 H1337 Z" fill="#7ab8ec" stroke="#2f6fb0" stroke-width="1"/><path d="M1349.2 121.3 V130" stroke="#2f6fb0" stroke-width="1.1"/><path d="M1356 119.2 L1368.8 133.4 M1368.8 119.2 L1356 133.4" stroke="#e87878" stroke-width="1.4"/><rect x="1385.5" y="112.5" width="34" height="26.2" fill="#fafafa" stroke="#4a4a4a" stroke-width="1.5"/><path d="M1385.5 120.8 H1419.5 M1385.5 129.6 H1419.5 M1394.6 112.5 V138.7 M1410.8 112.5 V138.7" stroke="#999" stroke-width="1.2"/><rect x="1394.6" y="120.8" width="16.2" height="8.8" fill="#7ab8ec" stroke="#2f6fb0" stroke-width="1"/><path d="M1392.8 107 H1411.5 M1392.8 105.3 V108.7 M1411.5 105.3 V108.7" stroke="#4a90c8" stroke-width="1.2"/><path d="M1295.5 176.5 L1298.3 179.3 L1301.1 176.5" fill="none" stroke="#444" stroke-width="1.3"/><path d="M1347.2 176.5 L1350 179.3 L1352.8 176.5" fill="none" stroke="#444" stroke-width="1.3"/><path d="M1400.2 176.5 L1403 179.3 L1405.8 176.5" fill="none" stroke="#444" stroke-width="1.3"/></svg>
<div class="t" style="top:152px;font-size:14.6px;color:#444444;left:1297.5px;transform:translateX(-50%) scaleX(0.99);transform-origin:center 50%;">Insert</div>
<div class="t" style="top:152px;font-size:14.6px;color:#444444;left:1350px;transform:translateX(-50%) scaleX(0.99);transform-origin:center 50%;">Delete</div>
<div class="t" style="top:152px;font-size:14.6px;color:#444444;left:1402px;transform:translateX(-50%) scaleX(0.99);transform-origin:center 50%;">Format</div>
<svg class="a" style="left:0px;top:0px;" width="1920" height="943" viewBox="0 0 1920 943"><path d="M1463.5 119 H1450.5 L1458 127 L1450.5 135 H1464" fill="none" stroke="#444" stroke-width="1.5"/><path d="M1540.5 125 L1543.3 127.8 L1546.1 125" fill="none" stroke="#444" stroke-width="1.3"/><path d="M1447.8 165.7 L1459.6 155.2 L1466 162.7 L1454.3 173.2 Z" fill="#fff" stroke="#b45cc8" stroke-width="1.4" stroke-linejoin="round"/><path d="M1447.8 165.7 L1451.9 162.1 L1458.3 169.6 L1454.3 173.2 Z" fill="#cf86dc" stroke="#b45cc8" stroke-width="1.3" stroke-linejoin="round"/><path d="M1510.5 163.5 L1513.3 166.3 L1516.1 163.5" fill="none" stroke="#444" stroke-width="1.3"/><text x="1565.5" y="123.4" font-family="Liberation Sans" font-size="19" fill="#3d8fd0">A</text><text x="1565.8" y="141.5" font-family="Liberation Sans" font-size="19" fill="#444">Z</text><path d="M1582 116.8 H1600.6 L1593.5 126.5 V135.5 H1589 V126.5 Z" fill="#fff" stroke="#555" stroke-width="1.5" stroke-linejoin="round"/><circle cx="1643.5" cy="121.5" r="12.5" fill="none" stroke="#555" stroke-width="1.3"/><path d="M1634.5 130.5 L1621.5 144" stroke="#555" stroke-width="1.3"/><path d="M1599.5 176.5 L1602.3 179.3 L1605.1 176.5 M1658.5 176.5 L1661.3 179.3 L1664.1 176.5" fill="none" stroke="#444" stroke-width="1.3"/><path d="M1704 108.3 H1719.5 L1710 122.5 H1721.3 L1697 142.3 L1702.8 127.8 H1695.6 Z" fill="#7ab8ec" stroke="#3a8ad8" stroke-width="1.4" stroke-linejoin="round"/><path d="M1900.5 202 L1905 197.5 L1909.5 202" fill="none" stroke="#444" stroke-width="1.5"/></svg>
<div class="t" style="top:121px;font-size:14.6px;color:#444444;left:1472px;transform:scaleX(1.0);transform-origin:left 50%;">AutoSum</div>
<div class="t" style="top:159px;font-size:14.6px;color:#444444;left:1472px;transform:scaleX(0.92);transform-origin:left 50%;">Clear</div>
<div class="t" style="top:152px;font-size:14.6px;color:#444444;left:1583.5px;transform:translateX(-50%) scaleX(0.97);transform-origin:center 50%;">Sort &amp;</div>
<div class="t" style="top:170px;font-size:14.6px;color:#444444;left:1577px;transform:translateX(-50%) scaleX(0.97);transform-origin:center 50%;">Filter</div>
<div class="t" style="top:152px;font-size:14.6px;color:#444444;left:1639px;transform:translateX(-50%) scaleX(0.97);transform-origin:center 50%;">Find &amp;</div>
<div class="t" style="top:170px;font-size:14.6px;color:#444444;left:1631.5px;transform:translateX(-50%) scaleX(0.97);transform-origin:center 50%;">Select</div>
<div class="t" style="top:152px;font-size:14.6px;color:#444444;left:1708.3px;transform:translateX(-50%) scaleX(0.95);transform-origin:center 50%;">Ideas</div>
<div class="a" style="left:159px;top:20px;width:324px;height:116px;background:#fff;border-radius:4px;box-shadow:0 2px 10px rgba(0,0,0,0.25);"></div>
<svg class="a" style="left:146px;top:70px;" width="14" height="17" viewBox="0 0 14 17"><path d="M13 1.5 L1.7 8.9 L13 15.5 Z" fill="#fff" style="filter:drop-shadow(-1px 0 1.2px rgba(0,0,0,0.18))"/></svg>
<div class="t" style="top:41px;font-size:20px;color:#4a4a4a;font-weight:bold;left:179.7px;transform:scaleX(0.99);transform-origin:left 50%;">Click on "Home"</div>
<svg class="a" style="left:184px;top:92px;" width="23" height="31" viewBox="0 0 23 31"><path d="M11.5 0.5 C5.3 0.5 0.5 5.3 0.5 11.5 C0.5 18 7 24 11.5 30.5 C16 24 22.5 18 22.5 11.5 C22.5 5.3 17.7 0.5 11.5 0.5 Z" fill="#3f4160"/><path d="M16.5 8.5 A6 6 0 1 0 17 12 L12 12" fill="none" stroke="#4fd3c4" stroke-width="2.4"/></svg>
</body></html>
